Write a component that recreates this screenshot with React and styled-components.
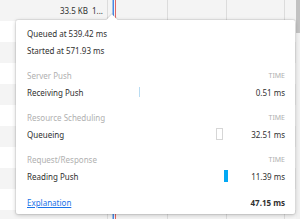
import styled, { createGlobalStyle } from "styled-components";

const Global = createGlobalStyle`
  html, body {
    margin: 0;
    padding: 0;
    background: #ffffff;
    overflow: hidden;
  }
  body {
    font-family: "Noto Sans", "Open Sans", sans-serif;
    font-size: 8px;
    color: #303030;
  }
`;

const Page = styled.div`
  position: relative;
  width: 300px;
  height: 219px;
  display: flex;
  overflow: hidden;
`;

const Table = styled.div`
  position: relative;
  flex: 1;
  display: flex;
  flex-direction: column;
`;

const Row = styled.div`
  display: grid;
  grid-template-columns: 90px 17px 60px 59px 58px 12px;
  height: 21px;
  flex-shrink: 0;
  background: ${(p) => (p.$odd ? "#ffffff" : "#f4f4f4")};
`;

const Cell = styled.div`
  display: flex;
  align-items: center;
  justify-content: ${(p) => (p.$right ? "flex-end" : "flex-start")};
  padding: 0 2px;
  border-left: ${(p) => (p.$line ? "1px solid #dcdcdc" : "none")};
  white-space: nowrap;
  overflow: hidden;
`;

const EventLine = styled.div`
  position: absolute;
  top: 0;
  bottom: 0;
  width: ${(p) => p.$w}px;
  left: ${(p) => p.$x}px;
  background: ${(p) => p.$color};
`;

const Scrollbar = styled.div`
  width: 4px;
  background: #f1f1f1;
  display: flex;
  flex-direction: column;
`;

const Thumb = styled.div`
  height: 33px;
  background: #c2c2c2;
`;

const Popover = styled.div`
  position: absolute;
  left: 16px;
  top: 20px;
  width: 279px;
  background: #ffffff;
  border-radius: 2px;
  box-shadow: 0 0 0 1px rgba(0, 0, 0, 0.06), 0 1px 4px rgba(0, 0, 0, 0.22);
  padding: 5px 10px 3px 11px;
  box-sizing: border-box;
  display: flex;
  flex-direction: column;

  &::before {
    content: "";
    position: absolute;
    left: 92px;
    top: -4px;
    width: 8px;
    height: 8px;
    background: #ffffff;
    transform: rotate(45deg);
    box-shadow: -1px -1px 1px rgba(0, 0, 0, 0.1);
  }
`;

const Line = styled.div`
  display: grid;
  grid-template-columns: 109px 94px 1fr;
  align-items: center;
  height: 17px;
  margin-top: ${(p) => p.$gap || 0}px;
  color: ${(p) => (p.$header ? "#b0b0b0" : "#303030")};
  white-space: nowrap;
`;

const TimeHead = styled.div`
  grid-column: 3;
  text-align: right;
  font-size: 7px;
  color: #b0b0b0;
`;

const Track = styled.div`
  position: relative;
  height: 17px;
`;

const Bar = styled.div`
  position: absolute;
  top: ${(p) => p.$top}px;
  height: ${(p) => p.$h}px;
  background: ${(p) => p.$color};
  border: ${(p) => (p.$outline ? "1px solid #d6d6d6" : "none")};
  box-sizing: border-box;
`;

const Value = styled.div`
  grid-column: 3;
  text-align: right;
  font-weight: ${(p) => (p.$bold ? 700 : 400)};
`;

const Link = styled.a`
  color: #1a73e8;
  text-decoration: underline;
  cursor: pointer;
`;

const columns = [
  { right: true, line: false },
  { right: false, line: false },
  { right: false, line: true },
  { right: false, line: true },
  { right: false, line: true },
  { right: false, line: true },
];

const sections = [
  {
    title: "Server Push",
    label: "Receiving Push",
    time: "0.51 ms",
    bar: { left: 3, width: 1, top: 3, h: 10, color: "#b9dcf2" },
  },
  {
    title: "Resource Scheduling",
    label: "Queueing",
    time: "32.51 ms",
    bar: { left: 80, width: 7, top: 2, h: 12, color: "#ffffff", outline: true },
  },
  {
    title: "Request/Response",
    label: "Reading Push",
    time: "11.39 ms",
    bar: { left: 88, width: 4, top: 2, h: 12, color: "#03a9f4" },
  },
];

export default function App() {
  const rows = Array.from({ length: 11 });
  return (
    <>
      <Global />
      <Page>
        <Table>
          {rows.map((_, i) => (
            <Row key={i} $odd={i % 2 === 1}>
              {columns.map((c, j) => (
                <Cell key={j} $right={c.right} $line={c.line}>
                  {i === 0 && j === 0 ? "33.5 KB" : null}
                  {i === 0 && j === 1 ? "1..." : null}
                </Cell>
              ))}
            </Row>
          ))}
          <EventLine $x={112} $w={1} $color="#9ec3e6" />
          <EventLine $x={113} $w={1} $color="#4a86e8" />
          <EventLine $x={115} $w={1} $color="#e06666" />
        </Table>
        <Scrollbar>
          <Thumb />
        </Scrollbar>

        <Popover>
          <Line>Queued at 539.42 ms</Line>
          <Line>Started at 571.93 ms</Line>
          {sections.map((s) => (
            <div key={s.title}>
              <Line $header $gap={8}>
                <span>{s.title}</span>
                <TimeHead>TIME</TimeHead>
              </Line>
              <Line>
                <span>{s.label}</span>
                <Track>
                  <Bar
                    $top={s.bar.top}
                    $h={s.bar.h}
                    $color={s.bar.color}
                    $outline={s.bar.outline}
                    style={{ left: s.bar.left, width: s.bar.width }}
                  />
                </Track>
                <Value>{s.time}</Value>
              </Line>
            </div>
          ))}
          <Line $gap={9}>
            <span>
              <Link>Explanation</Link>
            </span>
            <Value $bold>47.15 ms</Value>
          </Line>
        </Popover>
      </Page>
    </>
  );
}
